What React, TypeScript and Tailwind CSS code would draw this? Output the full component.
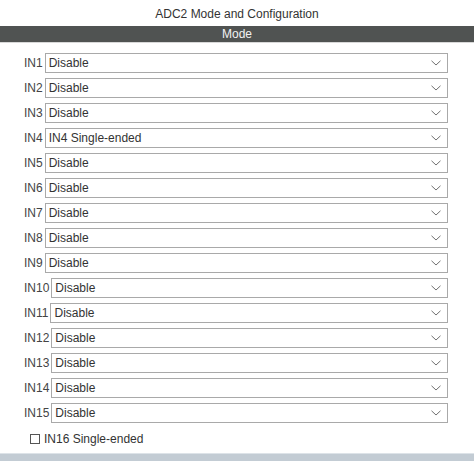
import React from "react";

const rows: [string, string][] = [
  ["IN1", "Disable"],
  ["IN2", "Disable"],
  ["IN3", "Disable"],
  ["IN4", "IN4 Single-ended"],
  ["IN5", "Disable"],
  ["IN6", "Disable"],
  ["IN7", "Disable"],
  ["IN8", "Disable"],
  ["IN9", "Disable"],
  ["IN10", "Disable"],
  ["IN11", "Disable"],
  ["IN12", "Disable"],
  ["IN13", "Disable"],
  ["IN14", "Disable"],
  ["IN15", "Disable"],
];

function Chevron() {
  return (
    <svg width="10" height="6" viewBox="0 0 10 6" className="shrink-0">
      <path d="M0.5 0.8 L5 5 L9.5 0.8" fill="none" stroke="#707070" strokeWidth="1" />
    </svg>
  );
}

export default function App() {
  return (
    <div
      className="w-[474px] h-[461px] bg-white text-[12px] text-[#3a3a3a] flex flex-col overflow-hidden"
      style={{ fontFamily: '"Liberation Sans", Arial, sans-serif' }}
    >
      <div className="h-[26px] flex items-center justify-center text-[#333] pt-[2px]">
        ADC2 Mode and Configuration
      </div>
      <div className="h-[16px] bg-[#505352] text-[#f2f2f2] flex items-center justify-center leading-none">
        Mode
      </div>
      <div className="h-[1px] bg-[#d8d8d8]" />
      <div className="flex flex-col gap-[5px] pt-[10px] pl-[24px] pr-[26px]">
        {rows.map(([label, value]) => (
          <div key={label} className="flex items-center h-[20px] gap-[2px]">
            <span className="shrink-0 text-[#444]">{label}</span>
            <div className="flex-1 h-[20px] border border-[#a9a9a9] bg-white flex items-center pl-[3px] pr-[6px]">
              <span className="flex-1 text-[#333]">{value}</span>
              <Chevron />
            </div>
          </div>
        ))}
      </div>
      <div className="flex items-center h-[16px] mt-[8px] pl-[30px] gap-[4px]">
        <div className="w-[10px] h-[10px] border border-[#555] bg-white" />
        <span className="text-[#333]">IN16 Single-ended</span>
      </div>
      <div className="flex-1" />
      <div className="h-[1px] bg-[#dde3e8]" />
      <div className="h-[7px] bg-[#c3ccd4]" />
    </div>
  );
}
